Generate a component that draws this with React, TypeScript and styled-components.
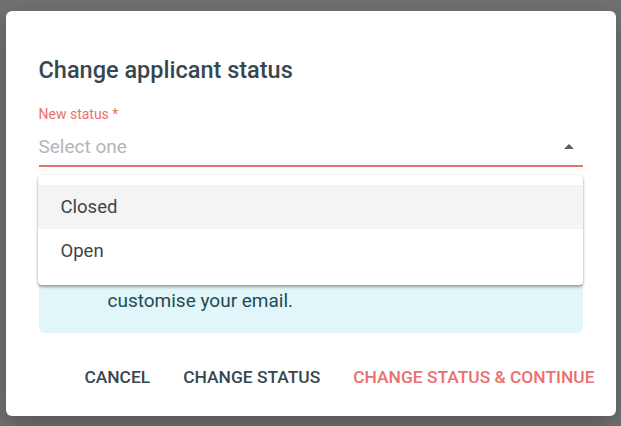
import React from "react";
import styled, { createGlobalStyle } from "styled-components";

const GlobalStyle = createGlobalStyle`
  html, body {
    margin: 0;
    padding: 0;
    background: #717171;
    font-family: Roboto, "Liberation Sans", Arial, sans-serif;
  }
  * {
    box-sizing: border-box;
  }
`;

const Backdrop = styled.div`
  width: 621px;
  height: 426px;
  display: flex;
  align-items: center;
  justify-content: center;
  background: #717171;
`;

const Dialog = styled.div`
  width: 610px;
  height: 405px;
  background: #ffffff;
  border-radius: 6px;
  box-shadow: 0 8px 24px rgba(0, 0, 0, 0.25);
  display: flex;
  flex-direction: column;
`;

const Content = styled.div`
  flex: 1;
  padding: 44px 33px 0 33px;
  display: flex;
  flex-direction: column;
`;

const Title = styled.h2`
  margin: 0;
  font-size: 23.5px;
  font-weight: 500;
  line-height: 30px;
  color: #37474f;
`;

const Field = styled.div`
  position: relative;
  margin-top: 20px;
  display: flex;
  flex-direction: column;
`;

const Label = styled.label`
  font-size: 14px;
  line-height: 18px;
  color: #ec6f6f;
`;

const SelectBox = styled.div`
  display: flex;
  align-items: center;
  justify-content: space-between;
  height: 44px;
  padding: 6px 9px 0 0;
  border-bottom: 2px solid #ec6f6f;
`;

const Placeholder = styled.span`
  font-size: 19px;
  color: #b3b6ba;
`;

const Menu = styled.ul`
  position: absolute;
  top: 70px;
  left: -1px;
  right: 0;
  margin: 0;
  padding: 10px 0 12px;
  list-style: none;
  background: #ffffff;
  border-radius: 4px;
  box-shadow: 0 2px 3px rgba(0, 0, 0, 0.35), 0 0 2px rgba(0, 0, 0, 0.12);
  z-index: 2;
`;

const MenuItem = styled.li<{ $active?: boolean }>`
  height: 44px;
  display: flex;
  align-items: center;
  padding-left: 23px;
  font-size: 18.5px;
  color: #3c4348;
  background: ${(p) => (p.$active ? "#f4f4f4" : "transparent")};
`;

const InfoBox = styled.div`
  margin-top: 46px;
  background: #e1f6f9;
  border-radius: 5px;
  padding: 18px 20px 18px 69px;
`;

const InfoText = styled.p`
  margin: 0;
  font-size: 19px;
  line-height: 28px;
  color: #1f4a55;
`;

const Actions = styled.div`
  display: flex;
  justify-content: flex-end;
  align-items: center;
  gap: 17px;
  padding: 0 13px 21px 0;
`;

const ActionButton = styled.button<{ $primary?: boolean }>`
  height: 36px;
  padding: 0 8px;
  border: none;
  background: transparent;
  font-family: Roboto, "Liberation Sans", Arial, sans-serif;
  font-size: 17.4px;
  font-weight: 500;
  text-transform: uppercase;
  color: ${(p) => (p.$primary ? "#ec6f6f" : "#37474f")};
  cursor: pointer;
`;

const App: React.FC = () => {
  return (
    <>
      <GlobalStyle />
      <Backdrop>
        <Dialog>
          <Content>
            <Title>Change applicant status</Title>
            <Field>
              <Label>New status *</Label>
              <SelectBox>
                <Placeholder>Select one</Placeholder>
                <svg width="10" height="5" viewBox="0 0 10 5">
                  <path d="M0 5 L5 0 L10 5 Z" fill="#5f5f5f" />
                </svg>
              </SelectBox>
              <Menu>
                <MenuItem $active>Closed</MenuItem>
                <MenuItem>Open</MenuItem>
              </Menu>
            </Field>
            <InfoBox>
              <InfoText>
                Choosing "Change status &amp; continue" will let you
                <br />
                review the message and
                <br />
                customise your email.
              </InfoText>
            </InfoBox>
          </Content>
          <Actions>
            <ActionButton>Cancel</ActionButton>
            <ActionButton>Change status</ActionButton>
            <ActionButton $primary>Change status &amp; continue</ActionButton>
          </Actions>
        </Dialog>
      </Backdrop>
    </>
  );
};

export default App;
